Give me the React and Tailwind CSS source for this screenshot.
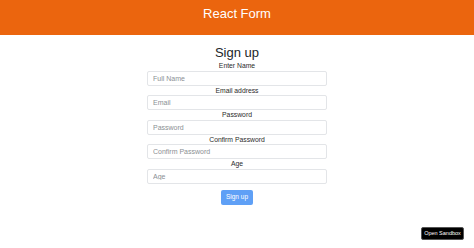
import React from "react";

const fields = [
  { id: "name", label: "Enter Name", placeholder: "Full Name", type: "text" },
  { id: "email", label: "Email address", placeholder: "Email", type: "email" },
  { id: "password", label: "Password", placeholder: "Password", type: "password" },
  { id: "confirm", label: "Confirm Password", placeholder: "Confirm Password", type: "password" },
  { id: "age", label: "Age", placeholder: "Age", type: "number" },
];

function App() {
  return (
    <div className="relative w-[474px] h-[248px] bg-white font-['Liberation_Sans',Arial,sans-serif] text-[#212529] overflow-hidden">
      <header className="h-[35px] bg-[#eb650e] flex items-center justify-center pb-[8px]">
        <h1 className="text-[13px] text-white">React Form</h1>
      </header>

      <form className="w-[180px] mx-auto flex flex-col items-center pt-[9px]">
        <h2 className="text-[13px] leading-[17px]">Sign up</h2>
        {fields.map((field) => {
          return (
            <div key={field.id} className="w-full flex flex-col items-center">
              <label htmlFor={field.id} className="text-[6.8px] leading-[9.5px] text-[#2b2b2b]">
                {field.label}
              </label>
              <input
                id={field.id}
                type={field.type}
                placeholder={field.placeholder}
                className="w-full h-[15px] border border-[#e3e5e8] rounded-[2px] px-[5px] text-[7px] placeholder:text-[#8b8f94] outline-none"
              />
            </div>
          );
        })}
        <button
          type="button"
          className="mt-[6px] w-[32px] h-[15px] rounded-[2px] bg-[#5fa0f6] text-white text-[6.5px]"
        >
          Sign up
        </button>
      </form>

      <button className="absolute left-[421px] top-[227px] w-[43px] h-[13px] bg-black border border-[#555] rounded-[2px] text-white text-[5.5px] flex items-center justify-center">
        Open Sandbox
      </button>
    </div>
  );
}

export default App;
